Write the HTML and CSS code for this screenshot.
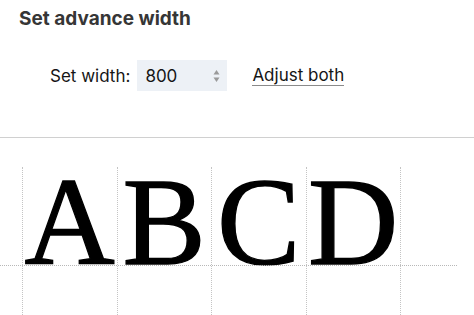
FILE: index.html
```html
<!DOCTYPE html>
<html>
<head>
<meta charset="utf-8">
<link rel="stylesheet" href="styles.css">
</head>
<body>
  <section class="panel">
    <h2 class="title">Set advance width</h2>
    <div class="row">
      <label class="label">Set width:</label>
      <div class="num">
        <span class="num-value">800</span>
        <span class="spin">
          <svg width="7" height="14" viewBox="0 0 7 14"><path d="M3.5 1 L6.5 5.5 L0.5 5.5 Z" fill="#9a9a9a"/><path d="M3.5 13 L6.5 8.5 L0.5 8.5 Z" fill="#9a9a9a"/></svg>
        </span>
      </div>
      <span class="link">Adjust both</span>
    </div>
  </section>
  <hr class="divider">
  <section class="glyphs">
    <div class="baseline"></div>
    <div class="cells">
      <div class="cell">A</div>
      <div class="cell">B</div>
      <div class="cell">C</div>
      <div class="cell">D</div>
    </div>
  </section>
</body>
</html>
```
FILE: styles.css
```css
html, body {
  margin: 0;
  padding: 0;
  background: #ffffff;
  overflow: hidden;
}
body {
  width: 474px;
  height: 315px;
  font-family: Inter, "Liberation Sans", sans-serif;
}
.panel {
  padding: 7px 0 0 19px;
}
.title {
  margin: 0;
  font-size: 19px;
  line-height: 24px;
  font-weight: 700;
  color: #363636;
}
.row {
  display: flex;
  align-items: center;
  margin-top: 29px;
  padding-left: 31px;
  height: 31px;
}
.label {
  font-size: 17px;
  color: #151515;
  margin-right: 7px;
}
.num {
  display: flex;
  align-items: center;
  justify-content: space-between;
  width: 90px;
  height: 31px;
  box-sizing: border-box;
  padding: 0 7px 0 8px;
  background: #edf1f6;
}
.num-value {
  font-size: 17px;
  color: #151515;
}
.spin {
  display: flex;
  align-items: center;
}
.link {
  margin-left: 25px;
  font-size: 17px;
  color: #151515;
  line-height: 20px;
  border-bottom: 1px solid #8a8a8a;
}
.divider {
  margin: 46px 0 0 0;
  border: 0;
  border-top: 1.5px solid #d0d0d0;
  height: 0;
}
.glyphs {
  position: relative;
  margin-top: 29px;
  height: 160px;
}
.baseline {
  position: absolute;
  left: 0;
  top: 98px;
  width: 457px;
  border-top: 1px dotted #b8b8b8;
}
.cells {
  display: flex;
  margin-left: 22px;
  width: 378px;
  height: 160px;
  border-right: 1px dotted #c4c4c4;
}
.cell {
  flex: 1;
  border-left: 1px dotted #c4c4c4;
  font-family: "Liberation Serif", serif;
  font-size: 125px;
  line-height: 111px;
  text-align: center;
  color: #000;
  -webkit-text-stroke: 1.3px #000;
}
```
